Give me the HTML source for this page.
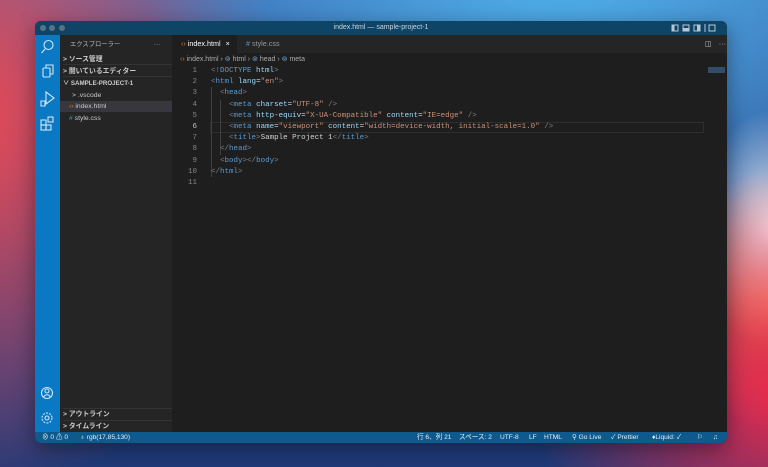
<!DOCTYPE html>
<html><head><meta charset="utf-8"><style>
*{margin:0;padding:0;box-sizing:border-box}
body{width:768px;height:467px;overflow:hidden;position:relative;font-family:"Liberation Sans","Noto Sans CJK JP",sans-serif;
background:
radial-gradient(ellipse 260px 220px at 790px 390px,#f0284a 0%,rgba(240,40,74,0) 100%),
radial-gradient(ellipse 70px 120px at 770px 230px,#f0f3fa 0%,rgba(220,230,245,0) 100%),
radial-gradient(ellipse 90px 130px at 770px 300px,#f39a3c 0%,rgba(243,154,60,0) 100%),
radial-gradient(ellipse 420px 300px at 560px -40px,#4fb2ea 0%,rgba(79,178,234,0) 100%),
radial-gradient(ellipse 320px 380px at -40px 120px,#f2464e 0%,rgba(242,70,78,0) 100%),
linear-gradient(180deg,#3d6fb5 0%,#27478a 60%,#1f3a78 100%);}
.win{position:absolute;left:35px;top:21px;width:692px;height:422px;background:#1e1e1e;border-radius:6px;overflow:hidden;box-shadow:0 6px 20px rgba(0,0,0,.4)}
.title{position:absolute;left:0;top:0;width:100%;height:14px;background:#0e4466;color:#c8d4dc;font-size:7px;text-align:center;line-height:14px}
.dot{position:absolute;top:4px;width:6px;height:6px;border-radius:50%;background:#5a7384}
.act{position:absolute;left:0;top:14px;width:25px;height:397px;background:#0a78c2}
.side{position:absolute;left:25px;top:14px;width:112px;height:397px;background:#252526;color:#ccc;font-size:6.8px}
.side div{position:absolute;left:0;width:112px;height:11px;line-height:11px;white-space:nowrap}
.edit{position:absolute;left:137px;top:14px;width:555px;height:397px;background:#1e1e1e}
.tabs{position:absolute;left:0;top:0;width:100%;height:18px;background:#252526}
.tab{position:absolute;top:0;height:18px;line-height:18px;font-size:7.2px;padding-left:9px}
.code{position:absolute;left:0;top:31px;font-family:"Liberation Mono",monospace;font-size:7.5px;color:#d4d4d4}
.ln{position:absolute;height:11.2px;line-height:11.2px;white-space:pre}
.n{width:25px;text-align:right;color:#858585}
.b{color:#808080}.t{color:#569cd6}.a{color:#9cdcfe}.s{color:#ce9178}
.status{position:absolute;left:0;top:411px;width:100%;height:11px;background:#0e5a8c;color:#e8eef4;font-size:6.6px;line-height:11px}
.status span{position:absolute;top:0}
.guide{position:absolute;width:1px;background:#404040}
</style></head><body>
<div class="win">
<div class="title"><span class="dot" style="left:5px"></span><span class="dot" style="left:14px"></span><span class="dot" style="left:24px"></span>index.html — sample-project-1
<svg style="position:absolute;left:636px;top:3px" width="52" height="8"><g fill="none" stroke="#b8c8d4" stroke-width="1"><rect x="1" y="1" width="6" height="6"/><rect x="12" y="1" width="6" height="6"/><rect x="23" y="1" width="6" height="6"/><line x1="34" y1="0" x2="34" y2="8"/><rect x="38" y="1" width="6" height="6"/></g><rect x="1" y="1" width="2.5" height="6" fill="#b8c8d4"/><rect x="12" y="4" width="6" height="3" fill="#b8c8d4"/><rect x="26" y="1" width="3" height="6" fill="#b8c8d4"/></svg></div>
<div class="act">
<svg width="25" height="397" fill="none" stroke="#cfe6f6" stroke-width="1.1">
<circle cx="13.5" cy="10" r="4.5"/><line x1="10" y1="14" x2="6.5" y2="18"/>
<rect x="8" y="33" width="7" height="9" rx="1"/><path d="M11 33v-3h7v9h-3"/>
<path d="M11 57l8 6-8 6zM6 66h4v5H6z"/>
<rect x="6" y="85" width="5" height="5"/><rect x="11" y="90" width="5" height="5"/><rect x="6" y="90" width="5" height="5"/><rect x="13" y="82" width="5" height="5"/>
<circle cx="12" cy="358" r="5.5"/><circle cx="12" cy="356" r="2"/><path d="M8.5 362c2-3 5-3 7 0"/>
<circle cx="12" cy="383" r="2"/><circle cx="12" cy="383" r="5" stroke-dasharray="2 1.2"/>
</svg></div>
<div class="side">
<div style="top:4px;left:10px;color:#bbb;font-size:6.3px">エクスプローラー<span style="position:absolute;left:84px">···</span></div>
<div style="top:19px;left:3px;font-weight:bold;border-bottom:1px solid #333">&gt; ソース管理</div>
<div style="top:31px;left:3px;font-weight:bold;border-bottom:1px solid #333">&gt; 開いているエディター</div>
<div style="top:43px;left:3px;font-weight:bold;font-size:6.2px">∨ SAMPLE-PROJECT-1</div>
<div style="top:55px;left:12px">&gt; .vscode</div>
<div style="top:66px;left:0;background:#37373d;padding-left:9px"><span style="color:#e37933">‹›</span> index.html</div>
<div style="top:78px;left:9px"><span style="color:#519aba">#</span> style.css</div>
<div style="top:373px;left:3px;font-weight:bold;border-top:1px solid #333">&gt; アウトライン</div>
<div style="top:385px;left:3px;font-weight:bold;border-top:1px solid #333">&gt; タイムライン</div>
</div>
<div class="edit">
<div class="tabs">
<div class="tab" style="left:0;width:65px;background:#1e1e1e;color:#fff"><span style="color:#e37933">‹›</span> index.html <span style="margin-left:3px">×</span></div>
<div class="tab" style="left:65px;width:63px;color:#999"><span style="color:#519aba">#</span> style.css</div>
<div class="tab" style="left:524px;color:#ccc">◫ <span style="margin-left:5px">···</span></div>
</div>
<div style="position:absolute;left:8px;top:19px;font-size:7px;color:#aaa;line-height:11px"><span style="color:#e37933">‹›</span> index.html › <span style="color:#6fa8dc">⊚</span> html › <span style="color:#6fa8dc">⊚</span> head › <span style="color:#6fa8dc">⊚</span> meta</div>
<div style="position:absolute;left:536px;top:32px;width:17px;height:6px;background:#3f5f84;opacity:.7"></div>
<div style="position:absolute;left:38px;top:87px;width:494px;height:11px;border:1px solid #2e2e2e"></div>
<div class="guide" style="left:39px;top:52px;height:90px"></div>
<div class="guide" style="left:48px;top:65px;height:55px"></div>
<div class="code">
<div class="ln n" style="top:0">1</div><div class="ln n" style="top:11.2px">2</div><div class="ln n" style="top:22.4px">3</div><div class="ln n" style="top:33.6px">4</div><div class="ln n" style="top:44.8px">5</div><div class="ln n" style="top:56px;color:#c6c6c6">6</div><div class="ln n" style="top:67.2px">7</div><div class="ln n" style="top:78.4px">8</div><div class="ln n" style="top:89.6px">9</div><div class="ln n" style="top:100.8px">10</div><div class="ln n" style="top:112px">11</div>
<div class="ln" style="left:39px;top:0"><span class="b">&lt;!</span><span class="t">DOCTYPE</span> <span class="a">html</span><span class="b">&gt;</span></div>
<div class="ln" style="left:39px;top:11.2px"><span class="b">&lt;</span><span class="t">html</span> <span class="a">lang</span>=<span class="s">"en"</span><span class="b">&gt;</span></div>
<div class="ln" style="left:39px;top:22.4px">  <span class="b">&lt;</span><span class="t">head</span><span class="b">&gt;</span></div>
<div class="ln" style="left:39px;top:33.6px">    <span class="b">&lt;</span><span class="t">meta</span> <span class="a">charset</span>=<span class="s">"UTF-8"</span> <span class="b">/&gt;</span></div>
<div class="ln" style="left:39px;top:44.8px">    <span class="b">&lt;</span><span class="t">meta</span> <span class="a">http-equiv</span>=<span class="s">"X-UA-Compatible"</span> <span class="a">content</span>=<span class="s">"IE=edge"</span> <span class="b">/&gt;</span></div>
<div class="ln" style="left:39px;top:56px">    <span class="b">&lt;</span><span class="t">meta</span> <span class="a">name</span>=<span class="s">"viewport"</span> <span class="a">content</span>=<span class="s">"width=device-width, initial-scale=1.0"</span> <span class="b">/&gt;</span></div>
<div class="ln" style="left:39px;top:67.2px">    <span class="b">&lt;</span><span class="t">title</span><span class="b">&gt;</span>Sample Project 1<span class="b">&lt;/</span><span class="t">title</span><span class="b">&gt;</span></div>
<div class="ln" style="left:39px;top:78.4px">  <span class="b">&lt;/</span><span class="t">head</span><span class="b">&gt;</span></div>
<div class="ln" style="left:39px;top:89.6px">  <span class="b">&lt;</span><span class="t">body</span><span class="b">&gt;&lt;/</span><span class="t">body</span><span class="b">&gt;</span></div>
<div class="ln" style="left:39px;top:100.8px"><span class="b">&lt;/</span><span class="t">html</span><span class="b">&gt;</span></div>
</div>
</div>
<div class="status">
<span style="left:7px">⊗ 0 ⚠ 0</span><span style="left:45px">♁ rgb(17,85,130)</span>
<span style="left:382px">行 6、列 21</span><span style="left:424px">スペース: 2</span><span style="left:465px">UTF-8</span><span style="left:494px">LF</span><span style="left:509px">HTML</span><span style="left:537px">⚲ Go Live</span><span style="left:576px">✓ Prettier</span><span style="left:617px">♦Liquid: ✓</span><span style="left:662px">⚐</span><span style="left:678px">♫</span>
</div>
</div>
</body></html>
